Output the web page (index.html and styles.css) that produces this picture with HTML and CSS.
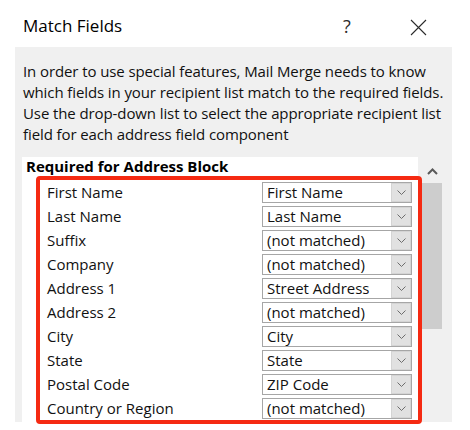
FILE: index.html
```html
<!DOCTYPE html>
<html>
<head>
<meta charset="utf-8">
<link rel="stylesheet" href="styles.css">
</head>
<body>
<div class="dialog">
  <div class="titlebar">
    <div class="title">Match Fields</div>
    <div class="help">?</div>
    <svg class="close" width="17" height="17" viewBox="0 0 17 17"><path d="M1 1 L16 16 M16 1 L1 16" stroke="#2b2b2b" stroke-width="1.1" fill="none"/></svg>
  </div>
  <div class="panel">
    <p class="intro">In order to use special features, Mail Merge needs to know which fields in your recipient list match to the required fields. Use the drop-down list to select the appropriate recipient list field for each address field component</p>
    <div class="listarea">
      <div class="listbox">
        <div class="heading">Required for Address Block</div>
        <div class="highlight">
          <div class="row"><span class="label">First Name</span><div class="combo"><span class="value">First Name</span><span class="btn"><svg width="9" height="5" viewBox="0 0 9 5"><path d="M0.5 0.5 L4.5 4.5 L8.5 0.5" stroke="#6d6d6d" fill="none" stroke-width="1"/></svg></span></div></div>
          <div class="row"><span class="label">Last Name</span><div class="combo"><span class="value">Last Name</span><span class="btn"><svg width="9" height="5" viewBox="0 0 9 5"><path d="M0.5 0.5 L4.5 4.5 L8.5 0.5" stroke="#6d6d6d" fill="none" stroke-width="1"/></svg></span></div></div>
          <div class="row"><span class="label">Suffix</span><div class="combo"><span class="value">(not matched)</span><span class="btn"><svg width="9" height="5" viewBox="0 0 9 5"><path d="M0.5 0.5 L4.5 4.5 L8.5 0.5" stroke="#6d6d6d" fill="none" stroke-width="1"/></svg></span></div></div>
          <div class="row"><span class="label">Company</span><div class="combo"><span class="value">(not matched)</span><span class="btn"><svg width="9" height="5" viewBox="0 0 9 5"><path d="M0.5 0.5 L4.5 4.5 L8.5 0.5" stroke="#6d6d6d" fill="none" stroke-width="1"/></svg></span></div></div>
          <div class="row"><span class="label">Address 1</span><div class="combo"><span class="value">Street Address</span><span class="btn"><svg width="9" height="5" viewBox="0 0 9 5"><path d="M0.5 0.5 L4.5 4.5 L8.5 0.5" stroke="#6d6d6d" fill="none" stroke-width="1"/></svg></span></div></div>
          <div class="row"><span class="label">Address 2</span><div class="combo"><span class="value">(not matched)</span><span class="btn"><svg width="9" height="5" viewBox="0 0 9 5"><path d="M0.5 0.5 L4.5 4.5 L8.5 0.5" stroke="#6d6d6d" fill="none" stroke-width="1"/></svg></span></div></div>
          <div class="row"><span class="label">City</span><div class="combo"><span class="value">City</span><span class="btn"><svg width="9" height="5" viewBox="0 0 9 5"><path d="M0.5 0.5 L4.5 4.5 L8.5 0.5" stroke="#6d6d6d" fill="none" stroke-width="1"/></svg></span></div></div>
          <div class="row"><span class="label">State</span><div class="combo"><span class="value">State</span><span class="btn"><svg width="9" height="5" viewBox="0 0 9 5"><path d="M0.5 0.5 L4.5 4.5 L8.5 0.5" stroke="#6d6d6d" fill="none" stroke-width="1"/></svg></span></div></div>
          <div class="row"><span class="label">Postal Code</span><div class="combo"><span class="value">ZIP Code</span><span class="btn"><svg width="9" height="5" viewBox="0 0 9 5"><path d="M0.5 0.5 L4.5 4.5 L8.5 0.5" stroke="#6d6d6d" fill="none" stroke-width="1"/></svg></span></div></div>
          <div class="row"><span class="label">Country or Region</span><div class="combo"><span class="value">(not matched)</span><span class="btn"><svg width="9" height="5" viewBox="0 0 9 5"><path d="M0.5 0.5 L4.5 4.5 L8.5 0.5" stroke="#6d6d6d" fill="none" stroke-width="1"/></svg></span></div></div>
        </div>
      </div>
      <div class="scrollbar">
        <div class="arrow"><svg width="11" height="7" viewBox="0 0 11 7"><path d="M1 6 L5.5 1.5 L10 6" stroke="#5a5a5a" fill="none" stroke-width="2"/></svg></div>
        <div class="thumb"></div>
      </div>
    </div>
  </div>
</div>
</body>
</html>
```

FILE: styles.css
```css
html, body {
  margin: 0;
  padding: 0;
  background: #ffffff;
}
body {
  width: 470px;
  height: 430px;
  overflow: hidden;
  font-family: "Open Sans", "Noto Sans", sans-serif;
  color: #111111;
}
.dialog {
  display: flex;
  flex-direction: column;
}
.titlebar {
  height: 47px;
  display: flex;
  align-items: center;
  padding-left: 23px;
}
.title {
  font-size: 17px;
  color: #000;
  flex: 1;
  margin-top: 4px;
}
.help {
  font-size: 18px;
  color: #2b2b2b;
  width: 12px;
  margin-right: 55px;
  margin-top: 4px;
}
.close {
  margin-right: 43px;
  margin-top: 8px;
}
.panel {
  margin-left: 15px;
  width: 437px;
  height: 375px;
  background: #f0f0f0;
  box-sizing: border-box;
  padding: 14px 0 0 8px;
}
.intro {
  margin: 0;
  font-size: 15px;
  letter-spacing: -0.1px;
  line-height: 21px;
  color: #111;
  width: 425px;
}
.listarea {
  display: flex;
  margin-top: 12px;
  margin-left: -1px;
}
.listbox {
  width: 396px;
  height: 266px;
  background: #ffffff;
  box-sizing: border-box;
}
.heading {
  font-weight: bold;
  font-size: 15px;
  line-height: 19px;
  padding-left: 4px;
  color: #000;
}
.highlight {
  margin-left: 14px;
  margin-right: -4px;
  border: 4px solid #f52a12;
  border-radius: 4px;
  padding: 0 6px 0 7px;
}
.row {
  height: 24px;
  display: flex;
  align-items: center;
  justify-content: space-between;
}
.label {
  font-size: 15px;
  color: #111;
}
.combo {
  width: 150px;
  height: 21px;
  box-sizing: border-box;
  border: 1px solid #a6a6a6;
  background: #fff;
  display: flex;
  align-items: center;
}
.value {
  flex: 1;
  font-size: 15px;
  padding-left: 4px;
  color: #111;
  line-height: 19px;
}
.btn {
  width: 20px;
  height: 19px;
  box-sizing: border-box;
  background: #e1e1e1;
  border: 1px solid #d4d4d4;
  display: flex;
  align-items: center;
  justify-content: center;
}
.scrollbar {
  width: 28px;
  display: flex;
  flex-direction: column;
  align-items: center;
}
.arrow {
  height: 26px;
  display: flex;
  align-items: center;
  justify-content: center;
  padding-top: 3px;
  box-sizing: border-box;
}
.thumb {
  width: 20px;
  height: 146px;
  background: #cdcdcd;
}
```
